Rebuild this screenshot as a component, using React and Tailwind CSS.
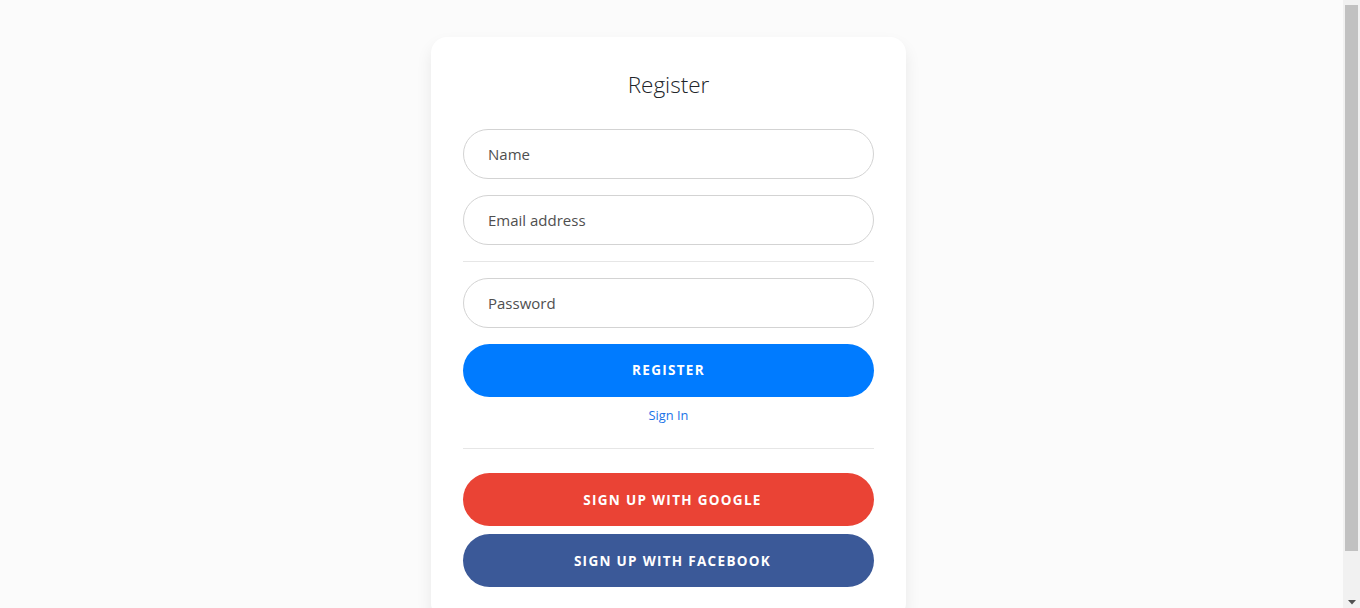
import React from "react";

const Field = ({ type, placeholder }) => (
  <input
    type={type}
    placeholder={placeholder}
    className="block w-full h-[50px] rounded-full border border-[#d3d3d3] bg-white px-6 text-[15px] text-[#495057] placeholder:text-[#4f4f4f] outline-none"
  />
);

const PillButton = ({ children, className, offset }) => (
  <button
    className={`block w-full h-[53px] rounded-full text-white text-[13.5px] font-bold uppercase tracking-[1.3px] ${className}`}
  >
    {offset && <span className="inline-block w-[8px]" />}
    {children}
  </button>
);

// page scrollbar as it shows in the screenshot
const Scrollbar = () => (
  <div className="flex w-[17px] shrink-0 flex-col bg-[#f1f1f1]">
    <div className="mx-[2px] mt-[5px] h-[546px] bg-[#c1c1c1]" />
    <div className="flex flex-1 items-end justify-center pb-[3px]">
      <svg width="8" height="5" viewBox="0 0 8 5">
        <path d="M0 0h8L4 4.5z" fill="#505050" />
      </svg>
    </div>
  </div>
);

export default function App() {
  return (
    <div
      className="flex h-[608px] overflow-hidden bg-[#fbfbfb]"
      style={{ fontFamily: '"Open Sans", "Noto Sans", sans-serif' }}
    >
      <div className="flex-1">
        <div className="flex justify-center pr-[6px] pt-[37px] pb-[48px]">
          <div className="w-[475px] rounded-2xl bg-white p-8 shadow-[0_0.5rem_1rem_0_rgba(0,0,0,0.08)]">
            <h5 className="mt-[3px] mb-8 text-center text-[22.5px] font-light leading-[25px] text-[#212529]">
              Register
            </h5>
            <form onSubmit={(e) => e.preventDefault()}>
              <div className="mb-4">
                <Field type="text" placeholder="Name" />
              </div>
              <div className="mb-4">
                <Field type="email" placeholder="Email address" />
              </div>
              <hr className="my-4 border-t border-[#e6e6e6]" />
              <div className="mb-4">
                <Field type="password" placeholder="Password" />
              </div>
              <PillButton className="bg-[#007bff]">Register</PillButton>
              <a
                href="#"
                className="mt-[9px] block text-center text-[12.8px] leading-[1.5] text-[#1a73e8]"
              >
                Sign In
              </a>
              <hr className="mt-[23px] mb-6 border-t border-[#e6e6e6]" />
              <PillButton className="mb-2 bg-[#ea4335]" offset>
                Sign up with Google
              </PillButton>
              <PillButton className="bg-[#3b5998]" offset>
                Sign up with Facebook
              </PillButton>
            </form>
          </div>
        </div>
      </div>
      <Scrollbar />
    </div>
  );
}
